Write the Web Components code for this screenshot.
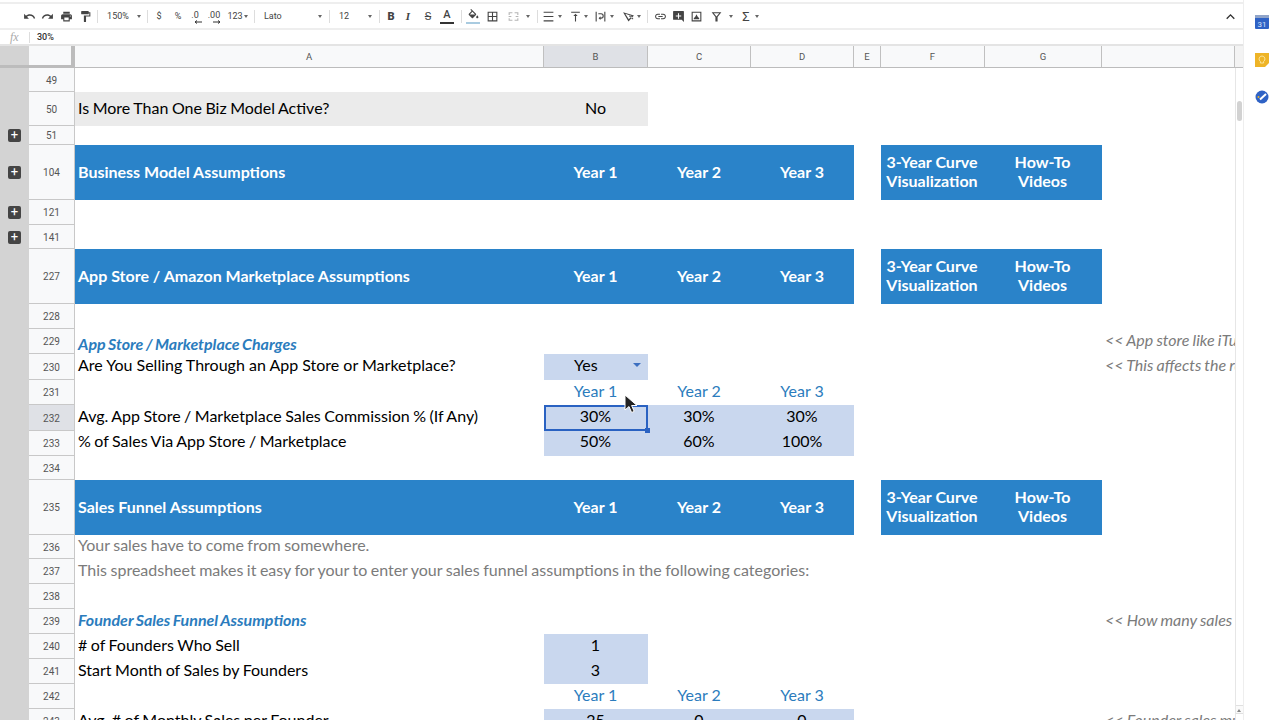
<!DOCTYPE html>
<html>
<head>
<meta charset="utf-8">
<title>Sheet</title>
<style>
	html, body { margin: 0; height: 100%; overflow: hidden; background: #fff; }
</style>
</head>
<body>
<gs-app>
	<gs-toolbar slot="toolbar"></gs-toolbar>
	<gs-formula slot="formula" value="30%"></gs-formula>
	<gs-colhead slot="colhead"></gs-colhead>
	<gs-side slot="side"></gs-side>

	<gs-row n="49" h="24"></gs-row>
	<gs-row n="50" h="34" lift="3">
		<gs-cell col="a" kind="grey">Is More Than One Biz Model Active?</gs-cell>
		<gs-cell col="b" kind="grey" center>No</gs-cell>
	</gs-row>
	<gs-row n="51" h="19" plus></gs-row>
	<gs-section n="104" h="55" plus title="Business Model Assumptions"></gs-section>
	<gs-row n="121" h="25" plus></gs-row>
	<gs-row n="141" h="24" plus></gs-row>
	<gs-section n="227" h="55" title="App Store / Amazon Marketplace Assumptions"></gs-section>
	<gs-row n="228" h="25"></gs-row>
	<gs-row n="229" h="25">
		<gs-cell col="a" kind="title" style="padding:5px 3px 0">App Store / Marketplace Charges</gs-cell>
		<gs-cell col="h" kind="note">&lt;&lt; App store like iTunes or Google Play</gs-cell>
	</gs-row>
	<gs-row n="230" h="26" lift="5">
		<gs-cell col="a" style="word-spacing:0">Are You Selling Through an App Store or Marketplace?</gs-cell>
		<gs-cell col="b" kind="input"><gs-dropdown>Yes</gs-dropdown></gs-cell>
		<gs-cell col="h" kind="note">&lt;&lt; This affects the revenue you keep</gs-cell>
	</gs-row>
	<gs-row n="231" h="25" lift="4">
		<gs-cell col="b" kind="year" center>Year 1</gs-cell>
		<gs-cell col="c" kind="year" center>Year 2</gs-cell>
		<gs-cell col="d" kind="year" center>Year 3</gs-cell>
	</gs-row>
	<gs-row n="232" h="26" lift="5" active>
		<gs-cell col="a">Avg. App Store / Marketplace Sales Commission % (If Any)</gs-cell>
		<gs-cell col="b" kind="input" center selected>30%</gs-cell>
		<gs-cell col="c" kind="input" center>30%</gs-cell>
		<gs-cell col="d" kind="input" center>30%</gs-cell>
	</gs-row>
	<gs-row n="233" h="25" lift="5">
		<gs-cell col="a">% of Sales Via App Store / Marketplace</gs-cell>
		<gs-cell col="b" kind="input" center>50%</gs-cell>
		<gs-cell col="c" kind="input" center>60%</gs-cell>
		<gs-cell col="d" kind="input" center>100%</gs-cell>
	</gs-row>
	<gs-row n="234" h="24"></gs-row>
	<gs-section n="235" h="55" title="Sales Funnel Assumptions"></gs-section>
	<gs-row n="236" h="24">
		<gs-cell col="a" kind="muted">Your sales have to come from somewhere.</gs-cell>
	</gs-row>
	<gs-row n="237" h="25">
		<gs-cell col="a" kind="muted" spill>This spreadsheet makes it easy for your to enter your sales funnel assumptions in the following categories:</gs-cell>
	</gs-row>
	<gs-row n="238" h="25"></gs-row>
	<gs-row n="239" h="25">
		<gs-cell col="a" kind="title">Founder Sales Funnel Assumptions</gs-cell>
		<gs-cell col="h" kind="note">&lt;&lt; How many sales can each founder close</gs-cell>
	</gs-row>
	<gs-row n="240" h="25">
		<gs-cell col="a"># of Founders Who Sell</gs-cell>
		<gs-cell col="b" kind="input" center>1</gs-cell>
	</gs-row>
	<gs-row n="241" h="25">
		<gs-cell col="a">Start Month of Sales by Founders</gs-cell>
		<gs-cell col="b" kind="input" center>3</gs-cell>
	</gs-row>
	<gs-row n="242" h="25">
		<gs-cell col="b" kind="year" center>Year 1</gs-cell>
		<gs-cell col="c" kind="year" center>Year 2</gs-cell>
		<gs-cell col="d" kind="year" center>Year 3</gs-cell>
	</gs-row>
	<gs-row n="243" h="25">
		<gs-cell col="a">Avg. # of Monthly Sales per Founder</gs-cell>
		<gs-cell col="b" kind="input" center>25</gs-cell>
		<gs-cell col="c" kind="input" center>0</gs-cell>
		<gs-cell col="d" kind="input" center>0</gs-cell>
		<gs-cell col="h" kind="note">&lt;&lt; Founder sales multiply over time</gs-cell>
	</gs-row>
</gs-app>

<script>
const icon = (d, size = 15, fill = '#444') =>
	`<svg width="${size}" height="${size}" viewBox="0 0 24 24" fill="${fill}" fill-rule="evenodd"><path d="${d}"/></svg>`;

const ICONS = {
	undo: 'M12.5 8c-2.65 0-5.05.99-6.9 2.6L2 7v9h9l-3.62-3.62c1.39-1.16 3.16-1.88 5.12-1.88 3.54 0 6.55 2.31 7.6 5.5l2.37-.78C21.08 11.03 17.15 8 12.5 8z',
	redo: 'M18.4 10.6C16.55 8.99 14.15 8 11.5 8c-4.65 0-8.58 3.03-9.96 7.22L3.9 16c1.05-3.19 4.05-5.5 7.6-5.5 1.95 0 3.73.72 5.12 1.88L13 16h9V7l-3.6 3.6z',
	print: 'M19 8H5c-1.66 0-3 1.34-3 3v6h4v4h12v-4h4v-6c0-1.66-1.34-3-3-3zm-3 11H8v-5h8v5zm3-7c-.55 0-1-.45-1-1s.45-1 1-1 1 .45 1 1-.45 1-1 1zm-1-9H6v4h12V3z',
	paint: 'M18 4V3c0-.55-.45-1-1-1H5c-.55 0-1 .45-1 1v4c0 .55.45 1 1 1h12c.55 0 1-.45 1-1V6h1v4H9v11c0 .55.45 1 1 1h2c.55 0 1-.45 1-1v-9h8V4h-3z',
	fill: 'M16.56 8.94L7.62 0 6.21 1.41l2.38 2.38-5.15 5.15c-.59.59-.59 1.54 0 2.12l5.5 5.5c.29.29.68.44 1.06.44s.77-.15 1.06-.44l5.5-5.5c.59-.58.59-1.53 0-2.12zM5.21 10L10 5.21 14.79 10H5.21zM19 11.5s-2 2.17-2 3.5c0 1.1.9 2 2 2s2-.9 2-2c0-1.33-2-3.5-2-3.5z',
	borders: 'M3 3v18h18V3H3zm8 16H5v-6h6v6zm0-8H5V5h6v6zm8 8h-6v-6h6v6zm0-8h-6V5h6v6z',
	merge: 'M3 4h7v2H5v3H3zM14 4h7v5h-2V6h-5zM3 15h2v3h5v2H3zM19 15h2v5h-7v-2h5zM3 11h5v2H3zM16 11h5v2h-5z',
	halign: 'M3 21h18v-2H3v2zm0-8h18v-2H3v2zm0-10v2h18V3H3z',
	valign: 'M8 11h3v10h2V11h3l-4-4-4 4zM4 3v2h16V3H4z',
	wrap: 'M3 3h2v18H3zM19 3h2v18h-2zM8 6h5a5 5 0 0 1 0 10h-1v2.5L8.5 15l3.5-3.5V14h1a3 3 0 0 0 0-6H8z',
	rotate: 'M2 4l20 6-10 11zM6 7l6.5 10 5.5-6zM14 10l7 6-1 1.5-7-6z',
	link: 'M3.9 12c0-1.71 1.39-3.1 3.1-3.1h4V7H7c-2.76 0-5 2.24-5 5s2.24 5 5 5h4v-1.9H7c-1.71 0-3.1-1.39-3.1-3.1zM8 13h8v-2H8v2zm9-6h-4v1.9h4c1.71 0 3.1 1.39 3.1 3.1s-1.39 3.1-3.1 3.1h-4V17h4c2.76 0 5-2.24 5-5s-2.24-5-5-5z',
	comment: 'M3 2h18a1 1 0 0 1 1 1v19l-4-4H3a1 1 0 0 1-1-1V3a1 1 0 0 1 1-1zm8 4v4H7v2h4v4h2v-4h4v-2h-4V6z',
	chart: 'M3 3h18v18H3V3zm2 2v14h14V5H5zm2 12v-2l3-3 2-4 2 4 3 3v2z',
	filter: 'M3 4h18l-7 9v8h-4v-8zM7 6l5 6 5-6z',
};

/* [width, type, value] : every toolbar item is laid out by flow from its width */
const TOOLS = [
	[20, 'gap'],
	[18, 'icon', 'undo'], [18, 'icon', 'redo'], [20, 'icon', 'print'], [18, 'icon', 'paint'],
	[6, 'sep'],
	[36, 'text', '150%'], [6, 'arrow'],
	[10, 'sep'],
	[14, 'text', '$'], [24, 'text', '%'], [10, 'dec', '.0'], [28, 'inc', '.00'], [14, 'text', '123'], [8, 'arrow'],
	[8, 'sep'],
	[58, 'font', 'Lato'], [8, 'arrow'],
	[10, 'sep'],
	[20, 'text', '12'], [12, 'gap'], [8, 'arrow'],
	[10, 'sep'],
	[14, 'bold', 'B'], [20, 'ital', 'I'], [20, 'strike', 'S'], [18, 'color', 'A'],
	[10, 'sep'],
	[14, 'icon', 'fill', 'bar'], [24, 'icon', 'borders'], [18, 'icon', 'merge', 'faint'], [12, 'arrow'],
	[6, 'sep'],
	[16, 'icon', 'halign'], [8, 'arrow'],
	[3, 'gap'],
	[16, 'icon', 'valign'], [6, 'arrow'],
	[3, 'gap'],
	[17, 'icon', 'wrap'], [6, 'arrow'],
	[4, 'gap'],
	[18, 'icon', 'rotate'], [4, 'arrow'],
	[12, 'sep'],
	[14, 'icon', 'link'], [22, 'icon', 'comment'], [14, 'icon', 'chart'], [26, 'icon', 'filter'], [4, 'arrow'],
	[5, 'gap'],
	[16, 'sigma', 'Σ'], [6, 'arrow'],
];

class GsApp extends HTMLElement {
	constructor() {
		super().attachShadow({ mode: 'open' });
		this.shadowRoot.innerHTML = `
		<style>
			:host { display: flex; width: 1280px; height: 720px; overflow: hidden; font-family: Lato, sans-serif; background: #fff; }
			.main { width: 1243px; display: flex; flex-direction: column; padding-top: 4px; box-sizing: border-box; }
			.grid-wrap { flex: 1; display: flex; min-height: 0; }
			.rows { width: 1235px; height: 652px; overflow: hidden; display: flex; flex-direction: column; }
			.scroll { width: 8px; position: relative; background: #fff; border-left: 1px solid #e6e6e6; box-sizing: border-box; }
			.thumb { position: absolute; left: 1px; top: 33px; width: 5px; height: 20px; background: #d2d2d2; border-radius: 3px; }
			.up { position: absolute; left: 0; top: 637px; width: 7px; height: 9px; border: 1px solid #e0e0e0; border-width: 1px 0; box-sizing: border-box; background: #fafafa; }
			.up::after { content: ''; position: absolute; left: 1px; top: 3px; border: 2.5px solid transparent; border-top: 0; border-bottom: 3px solid #888; }
			.gutter { width: 1243px; height: 4px; position: absolute; top: 0; left: 0; box-sizing: border-box; border-top: 2px solid #fff; border-bottom: 2px solid #eee; }
		</style>
		<div class="gutter"></div>
		<div class="main">
			<slot name="toolbar"></slot>
			<slot name="formula"></slot>
			<slot name="colhead"></slot>
			<div class="grid-wrap">
				<div class="rows"><slot></slot></div>
				<div class="scroll"><div class="thumb"></div><div class="up"></div></div>
			</div>
		</div>
		<slot name="side"></slot>`;
	}
}

class GsToolbar extends HTMLElement {
	constructor() {
		super().attachShadow({ mode: 'open' });
		const items = TOOLS.map(([w, type, val, extra]) => {
			let inner = '';
			if (type === 'icon') {
				const fill = extra === 'faint' ? '#b5b5b5' : '#444';
				inner = icon(ICONS[val], 13, fill);
				if (extra === 'bar') inner = `<span class="lift">${inner}</span><i class="bar light"></i>`;
			}
			if (type === 'text' || type === 'font' || type === 'sigma') inner = val;
			if (type === 'dec') inner = `<span class="up">${val}</span><svg class="nudge" width="8" height="4" viewBox="0 0 8 4"><path d="M8 2H1M3 .5L1 2l2 1.5" fill="none" stroke="#333"/></svg>`;
			if (type === 'inc') inner = `<span class="up">${val}</span><svg class="nudge" width="8" height="4" viewBox="0 0 8 4"><path d="M0 2h7M5 .5L7 2 5 3.5" fill="none" stroke="#333"/></svg>`;
			if (type === 'bold') inner = `<b>${val}</b>`;
			if (type === 'ital') inner = `<em>${val}</em>`;
			if (type === 'strike') inner = `<s>${val}</s>`;
			if (type === 'color') inner = `<span class="up">${val}</span><i class="bar"></i>`;
			if (type === 'arrow') inner = '<u></u>';
			if (type === 'sep') inner = '<hr>';
			return `<div class="${type}" style="width:${w}px">${inner}</div>`;
		}).join('');
		this.shadowRoot.innerHTML = `
		<style>
			:host { display: flex; align-items: center; height: 24px; border-bottom: 2px solid #eee; font: 9px Roboto, sans-serif; color: #444; position: relative; flex: none; }
			div { flex: none; display: flex; align-items: center; justify-content: center; position: relative; height: 24px; white-space: nowrap; }
			svg { flex: none; display: block; }
			.font { justify-content: flex-start; padding-left: 6px; box-sizing: border-box; }
			.bold { font: bold 11px Roboto, sans-serif; }
			.ital { font: italic 11px "Liberation Serif", serif; font-weight: 700; }
			.strike { font: 11px Roboto, sans-serif; }
			.color { font: 500 11px Roboto, sans-serif; }
			.sigma { font: 13px Roboto, sans-serif; }
			hr { width: 1px; height: 13px; border: 0; margin: 0; background: #ddd; flex: none; }
			u { display: block; flex: none; border: 2.5px solid transparent; border-top: 3px solid #666; border-bottom: 0; }
			.bar { position: absolute; left: 50%; margin-left: -7px; bottom: 4px; width: 14px; height: 2px; background: #333; }
			.bar.light { background: #a9cbe0; }
			.up { display: block; margin-top: -3px; line-height: 12px; }
			.lift { display: block; margin-top: -1px; }
			.nudge { position: absolute; left: 50%; margin-left: -1px; bottom: 4px; }
			.chev { position: absolute; right: 6px; top: 0; width: 13px; height: 24px; }
		</style>
		${items}
		<div class="chev"><svg width="13" height="13" viewBox="0 0 24 24" fill="none" stroke="#333" stroke-width="2.6"><path d="M5 16l7-7 7 7"/></svg></div>`;
	}
}

class GsFormula extends HTMLElement {
	constructor() {
		super().attachShadow({ mode: 'open' });
		this.shadowRoot.innerHTML = `
		<style>
			:host { display: flex; align-items: center; height: 14px; border-bottom: 2px solid #e4e4e4; font: 500 9px Roboto, sans-serif; color: #333; flex: none; }
			.fx { width: 30px; box-sizing: border-box; padding-left: 10px; font: italic 12px "Liberation Serif", serif; color: #aaa; border-right: 1px solid #ddd; height: 11px; line-height: 10px; }
			.val { padding-left: 7px; }
		</style>
		<span class="fx">fx</span><span class="val"></span>`;
		this.shadowRoot.querySelector('.val').textContent = this.getAttribute('value');
	}
}

class GsColhead extends HTMLElement {
	constructor() {
		super().attachShadow({ mode: 'open' });
		const cols = [['A', 469], ['B', 104, 'on'], ['C', 103], ['D', 103], ['E', 27], ['F', 104], ['G', 117], ['', 133]];
		this.shadowRoot.innerHTML = `
		<style>
			:host { display: flex; height: 22px; flex: none; font: 9.5px Roboto, sans-serif; color: #555; background: #f8f9fa; }
			.side { width: 29px; background: #d3d3d3; border-bottom: 3px solid #bcbcbc; box-sizing: border-box; }
			.corner { width: 46px; box-sizing: border-box; background: #f8f9fa; border-right: 4px solid #bcbcbc; border-bottom: 3px solid #bcbcbc; }
			.col { box-sizing: border-box; display: flex; align-items: center; justify-content: center; border-right: 1px solid #c0c0c0; border-bottom: 1px solid #bcbcbc; }
			.on { background: #dfe1e6; }
			.col:last-of-type { border-right: 0; }
			.end { width: 8px; background: #f3f3f3; border-bottom: 1px solid #bcbcbc; box-sizing: border-box; }
		</style>
		<div class="side"></div><div class="corner"></div>
		${cols.map(([c, w, on]) => `<div class="col ${on || ''}" style="width:${w}px">${c}</div>`).join('')}
		<div class="end"></div>`;
	}
}

class GsRow extends HTMLElement {
	constructor() {
		super().attachShadow({ mode: 'open' });
		const plus = this.hasAttribute('plus') ? '<span class="plus">+</span>' : '';
		const on = this.hasAttribute('active') ? ' on' : '';
		this.shadowRoot.innerHTML = `
		<style>
			:host { display: grid; grid-template-columns: 29px 46px 469px 104px 103px 103px 27px 104px 117px 133px; flex: none; background: #fff; --lift: 4px; }
			.gut { background: #d3d3d3; display: flex; align-items: center; justify-content: center; }
			.plus { width: 13px; height: 13px; background: #444; color: #fff; border-radius: 2px; font: 13px/12px Roboto, sans-serif; text-align: center; }
			.num { background: #f8f9fa; border-right: 1px solid #c8c8c8; border-bottom: 1px solid #c8c8c8; box-sizing: border-box; padding-top: 1px; font: 10px Roboto, sans-serif; color: #555; display: flex; align-items: center; justify-content: center; }
			.num.on { background: #dfe1e6; }
		</style>
		<div class="gut">${plus}</div><div class="num${on}">${this.getAttribute('n')}</div><slot></slot>`;
		this.style.height = this.getAttribute('h') + 'px';
		this.style.gridTemplateRows = this.getAttribute('h') + 'px';
		if (this.hasAttribute('lift')) this.style.setProperty('--lift', this.getAttribute('lift') + 'px');
	}
}

/* a section header row: blue band across A-D and a second one across F-G */
class GsSection extends HTMLElement {
	constructor() {
		super().attachShadow({ mode: 'open' });
		const plus = this.hasAttribute('plus') ? ' plus' : '';
		this.shadowRoot.innerHTML = `
		<style>:host { display: block; flex: none; }</style>
		<gs-row n="${this.getAttribute('n')}" h="${this.getAttribute('h')}"${plus} lift="2">
			<gs-cell col="a" kind="band" class="t"></gs-cell>
			<gs-cell col="b" kind="band" center>Year 1</gs-cell>
			<gs-cell col="c" kind="band" center>Year 2</gs-cell>
			<gs-cell col="d" kind="band" center>Year 3</gs-cell>
			<gs-cell col="f" kind="band" center tight>3-Year Curve<br>Visualization</gs-cell>
			<gs-cell col="g" kind="band" center tight>How-To<br>Videos</gs-cell>
		</gs-row>`;
		this.shadowRoot.querySelector('.t').textContent = this.getAttribute('title');
		this.removeAttribute('title');
	}
}

class GsCell extends HTMLElement {
	constructor() {
		super().attachShadow({ mode: 'open' });
		this.shadowRoot.innerHTML = `
		<style>
			:host { display: flex; align-items: center; box-sizing: border-box; padding: 0 3px var(--lift, 4px); font: 16px/20px Lato, sans-serif; word-spacing: -0.6px; color: #000; white-space: nowrap; overflow: hidden; position: relative; min-width: 0; }
			:host([col=a]) { grid-column: 3; }
			:host([col=b]) { grid-column: 4; }
			:host([col=c]) { grid-column: 5; }
			:host([col=d]) { grid-column: 6; }
			:host([col=f]) { grid-column: 8; }
			:host([col=g]) { grid-column: 9; }
			:host([col=h]) { grid-column: 10; padding-left: 3px; }
			:host([center]) { justify-content: center; text-align: center; padding-right: 4px; }
			:host([spill]) { overflow: visible; }
			:host([kind=grey]) { background: #ebebeb; }
			:host([kind=input]) { background: #c9d7ee; }
			:host([kind=band]) { background: #2a83c9; color: #fff; font-weight: 700; word-spacing: 0; }
			:host([kind=band][tight]) { line-height: 19px; padding-bottom: 4px; padding-right: 5px; }
			:host([kind=title]) { color: #2b7cbd; font-weight: 700; font-style: italic; word-spacing: -1.1px; }
			:host([kind=year]) { color: #2b7cbd; word-spacing: 0; }
			:host([kind=note]) { color: #7b7b7b; font-style: italic; }
			:host([kind=muted]) { color: #7b7b7b; }
			:host([selected]) { box-shadow: inset 0 0 0 2px #2a62c2; overflow: visible; z-index: 2; }
			.handle { display: none; }
			:host([selected]) .handle { display: block; position: absolute; right: -2px; bottom: -2px; width: 5px; height: 5px; background: #2a62c2; border: 0; }
			:host([selected]) .cursor { display: block; }
			.cursor { display: none; position: absolute; left: 80px; top: -11px; z-index: 5; }
		</style>
		<span><slot></slot></span><i class="handle"></i>
		<svg class="cursor" width="14" height="20" viewBox="0 0 14 20"><path d="M1 1v15l4-3.5 2.6 6 2.6-1.1-2.6-5.9H13z" fill="#222" stroke="#fff" stroke-width="1"/></svg>`;
	}
}

class GsDropdown extends HTMLElement {
	constructor() {
		super().attachShadow({ mode: 'open' });
		this.shadowRoot.innerHTML = `
		<style>
			:host { display: flex; width: 97px; align-items: center; justify-content: space-between; padding-left: 27px; padding-right: 3px; box-sizing: border-box; }
			i { border: 4px solid transparent; border-top: 4px solid #3c6fc0; border-bottom: 0; }
		</style>
		<slot></slot><i></i>`;
	}
}

class GsSide extends HTMLElement {
	constructor() {
		super().attachShadow({ mode: 'open' });
		this.shadowRoot.innerHTML = `
		<style>
			:host { display: flex; flex-direction: column; align-items: center; gap: 21.5px; width: 37px; box-sizing: border-box; padding: 14px 1px 0 0; border-left: 1px solid #eee; flex: none; }
			svg { display: block; }
		</style>
		<svg width="16" height="16" viewBox="0 0 16 16">
			<rect x="1" y="1" width="14" height="14" rx="1" fill="#2f62c5"/>
			<rect x="1" y="1" width="14" height="3" fill="#90a4c9"/>
			<text x="8" y="12.5" text-anchor="middle" font-family="Roboto, sans-serif" font-size="8" fill="#d7e3fa">31</text>
		</svg>
		<svg width="16" height="16" viewBox="0 0 16 16">
			<path d="M1 1h14v10l-4 4H1z" fill="#eeb427"/>
			<path d="M8 4a3 3 0 0 0-1.6 5.5V11h3.2V9.5A3 3 0 0 0 8 4z" fill="none" stroke="#fbe49c" stroke-width="1"/>
		</svg>
		<svg width="16" height="16" viewBox="0 0 16 16">
			<circle cx="8" cy="8" r="6.5" fill="#2f62c5"/>
			<path d="M6 10.5l6-5.5" stroke="#fff" stroke-width="2" fill="none"/>
			<circle cx="4.5" cy="8" r="1" fill="#eeb427"/>
		</svg>`;
	}
}

customElements.define('gs-row', GsRow);
customElements.define('gs-cell', GsCell);
customElements.define('gs-dropdown', GsDropdown);
customElements.define('gs-section', GsSection);
customElements.define('gs-toolbar', GsToolbar);
customElements.define('gs-formula', GsFormula);
customElements.define('gs-colhead', GsColhead);
customElements.define('gs-side', GsSide);
customElements.define('gs-app', GsApp);
</script>
</body>
</html>
